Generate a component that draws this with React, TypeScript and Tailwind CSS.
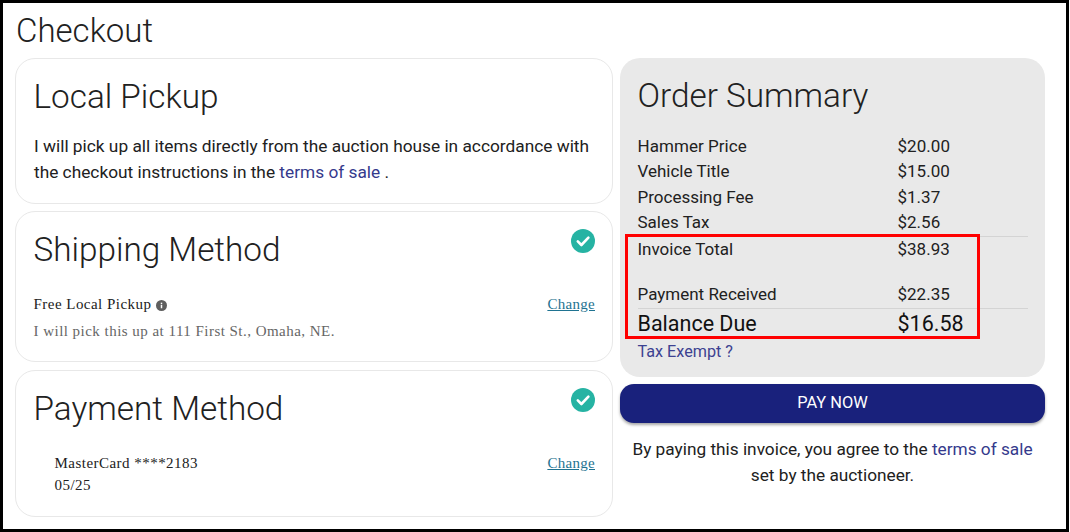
const roboto = "font-['Roboto',sans-serif]";
const serif = "font-['Liberation_Serif',serif]";

function CheckBadge() {
  return (
    <svg viewBox="0 0 24 24" className="mt-[3px] h-6 w-6 shrink-0">
      <circle cx="12" cy="12" r="12" fill="#26b3a3" />
      <path d="M6.8 12.4l3.6 3.6 7-7.4" fill="none" stroke="#fff" strokeWidth="2.6" strokeLinecap="round" strokeLinejoin="round" />
    </svg>
  );
}

function InfoDot() {
  return (
    <svg viewBox="0 0 12 12" className="ml-[5px] inline-block h-[11px] w-[11px] align-[-2px]">
      <circle cx="6" cy="6" r="6" fill="#5f5f5f" />
      <rect x="5.2" y="5.2" width="1.6" height="3.8" fill="#fff" />
      <rect x="5.2" y="2.9" width="1.6" height="1.5" fill="#fff" />
    </svg>
  );
}

function SummaryRow({ label, value, className = '' }: { label: string; value: string; className?: string }) {
  return (
    <div className={`flex h-[25.5px] items-center ${className}`}>
      <span className="w-[260px]">{label}</span>
      <span>{value}</span>
    </div>
  );
}

function ChangeLink() {
  return <a className={`${serif} -mt-px text-[15px] tracking-[0.3px] text-[#1f7391] underline`}>Change</a>;
}

export default function App() {
  return (
    <div className={`${roboto} h-[532px] w-[1070px] bg-white text-[#212121] relative`}>
      <div className="h-[532px] w-[1069px] border-[3px] border-black px-3 pt-[8px]">
        <h1 className="h-[47px] pl-px text-[33px] leading-[40px] font-light">Checkout</h1>
        <div className="flex gap-[7px]">
          <div className="flex w-[598px] flex-col">
            <section className="h-[146px] rounded-[20px] border border-[#e8e8e8] px-[17.5px] pt-[14px]">
              <h2 className="text-[33.3px] leading-[48px] font-light">Local Pickup</h2>
              <p className="mt-[12px] pl-[0.5px] text-[17.3px] leading-[26px]">
                I will pick up all items directly from the auction house in accordance with the checkout instructions in the{' '}
                <a className="text-[#353a8c]">terms of sale</a> .
              </p>
            </section>
            <section className="mt-[7px] h-[151px] rounded-[20px] border border-[#e8e8e8] pt-[14px] pr-[17px] pl-[17.5px]">
              <div className="flex justify-between">
                <h2 className="text-[33.3px] leading-[48px] font-light">Shipping Method</h2>
                <CheckBadge />
              </div>
              <div className="mt-[20px] flex items-start justify-between">
                <div className={`${serif} text-[15px] tracking-[0.47px]`}>
                  <div className="leading-[20px]">Free Local Pickup<InfoDot /></div>
                  <div className="mt-[7px] leading-[20px] text-[#666]">I will pick this up at 111 First St., Omaha, NE.</div>
                </div>
                <ChangeLink />
              </div>
            </section>
            <section className="mt-[8px] h-[147px] rounded-[20px] border border-[#e8e8e8] pt-[14px] pr-[17px] pl-[17.5px]">
              <div className="flex justify-between">
                <h2 className="text-[33.3px] leading-[48px] font-light">Payment Method</h2>
                <CheckBadge />
              </div>
              <div className="mt-[20px] flex items-start justify-between">
                <div className={`${serif} pl-[21px] text-[15px] tracking-[0.47px]`}>
                  <div className="leading-[20px]">MasterCard ****2183</div>
                  <div className="mt-[2px] leading-[20px]">05/25</div>
                </div>
                <ChangeLink />
              </div>
            </section>
          </div>
          <div className="flex w-[425px] flex-col">
            <section className="h-[319px] rounded-[20px] bg-[#e9e9e9] pt-[14px] pr-[17px] pl-[17.5px] text-[17px]">
              <h2 className="text-[33.3px] leading-[48px] font-light">Order Summary</h2>
              <div className="mt-[13.5px]">
                <SummaryRow label="Hammer Price" value="$20.00" className="tracking-[0.05px]" />
                <SummaryRow label="Vehicle Title" value="$15.00" />
                <SummaryRow label="Processing Fee" value="$1.37" />
                <SummaryRow label="Sales Tax" value="$2.56" />
                <div className="border-t border-[#d4d4d4]">
                  <SummaryRow label="Invoice Total" value="$38.93" />
                  <div className="h-[20px]" />
                  <SummaryRow label="Payment Received" value="$22.35" />
                </div>
                <div className="border-t border-[#d4d4d4]">
                  <SummaryRow label="Balance Due" value="$16.58" className="h-[31px] text-[21.5px] text-[#111]" />
                </div>
                <a className="-mt-px block text-[16.2px] leading-[26px] text-[#3d4291]">Tax Exempt ?</a>
              </div>
            </section>
            <button className="mt-[7px] h-[39px] w-full rounded-[14px] bg-[#19217c] text-[16.4px] text-white shadow-[0_2px_3px_rgba(0,0,0,0.35)]">
              PAY NOW
            </button>
            <p className="mt-[14px] text-center text-[17.25px] leading-[25.5px]">
              By paying this invoice, you agree to the <a className="text-[#353a8c]">terms of sale</a>
              <br />
              set by the auctioneer.
            </p>
          </div>
        </div>
      </div>
      {/* red annotation box drawn over the summary */}
      <div className="absolute top-[234px] left-[625px] h-[105px] w-[355px] border-[3px] border-[#ff0000]" />
    </div>
  );
}
